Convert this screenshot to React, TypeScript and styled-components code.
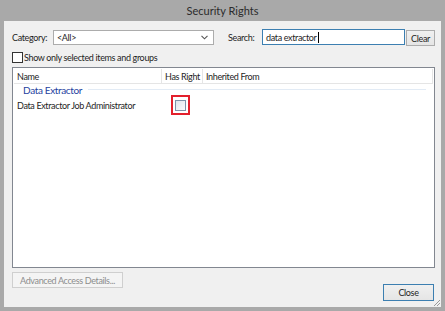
import React from "react";
import styled, { createGlobalStyle } from "styled-components";

const GlobalStyle = createGlobalStyle`
  html, body {
    margin: 0;
    padding: 0;
    background: #a9a9a9;
  }
  body {
    font-family: Lato, "Liberation Sans", sans-serif;
    font-size: 9px;
    letter-spacing: -0.35px;
    color: #1e1e1e;
  }
`;

const Window = styled.div`
  width: 445px;
  height: 311px;
  box-sizing: border-box;
  display: flex;
  flex-direction: column;
  background: #a9a9a9;
  padding: 0 4px 4px 4px;
`;

const TitleBar = styled.div`
  height: 21px;
  display: flex;
  align-items: center;
  justify-content: center;
  font-size: 11px;
  letter-spacing: 0;
  color: #2b2b2b;
`;

const Client = styled.div`
  flex: 1;
  background: #f0f0f0;
  display: flex;
  flex-direction: column;
  padding: 8px 6px 0 8px;
  position: relative;
`;

const TopRow = styled.div`
  display: flex;
  align-items: center;
  height: 16px;
`;

const Label = styled.span<{ $width: number }>`
  width: ${(p) => p.$width}px;
  flex: none;
  white-space: nowrap;
  line-height: 15px;
`;

const Select = styled.div`
  width: 161px;
  height: 15px;
  box-sizing: border-box;
  border: 1px solid #acacac;
  background: #fff;
  display: flex;
  align-items: center;
  justify-content: space-between;
  padding: 0 5px 0 3px;
  margin-right: 14px;
`;

const Chevron = styled.svg`
  width: 7px;
  height: 5px;
`;

const SearchInput = styled.div`
  width: 143px;
  height: 16px;
  box-sizing: border-box;
  border: 1px solid #3c7fb1;
  background: #fff;
  display: flex;
  align-items: center;
  padding-left: 3px;
`;

const Caret = styled.span`
  display: inline-block;
  width: 1px;
  height: 11px;
  background: #000;
  margin-left: 1px;
`;

const Button = styled.div<{ $width: number; $disabled?: boolean; $focused?: boolean }>`
  width: ${(p) => p.$width}px;
  height: 16px;
  box-sizing: border-box;
  display: flex;
  align-items: center;
  justify-content: center;
  white-space: nowrap;
  border: 1px solid
    ${(p) => (p.$disabled ? "#cfcfcf" : p.$focused ? "#3c7fb1" : "#acacac")};
  background: ${(p) => (p.$disabled ? "#f4f4f4" : "linear-gradient(#f0f0f0, #e5e5e5)")};
  color: ${(p) => (p.$disabled ? "#8d8d8d" : "#1e1e1e")};
`;

const ClearButton = styled(Button)`
  margin-left: 1px;
  margin-top: 2px;
`;

const CheckRow = styled.div`
  display: flex;
  align-items: center;
  margin-top: 6px;
  height: 12px;
`;

const Box = styled.span`
  width: 11px;
  height: 11px;
  box-sizing: border-box;
  border: 1px solid #333;
  background: #fff;
  margin-right: 1px;
  flex: none;
`;

const ListBox = styled.div`
  margin-top: 4px;
  height: 201px;
  box-sizing: border-box;
  border: 1px solid #828790;
  background: #fff;
  padding: 1px;
`;

const Header = styled.div`
  display: grid;
  grid-template-columns: 148px 41px 1fr;
  height: 14px;
  border-bottom: 1px solid #e5e5e5;
`;

const HeaderCell = styled.div`
  display: flex;
  align-items: center;
  padding-left: 3px;
  border-right: 1px solid #e5e5e5;
  white-space: nowrap;
`;

const GroupRow = styled.div`
  display: flex;
  align-items: center;
  height: 11px;
  padding-left: 9px;
  padding-right: 7px;
  color: #1e3f9e;
  font-size: 10px;
`;

const GroupLine = styled.span`
  flex: 1;
  height: 1px;
  background: #e2ebf5;
  margin-left: 6px;
`;

const ItemRow = styled.div`
  display: grid;
  grid-template-columns: 154px 20px 1fr;
  align-items: center;
  height: 20px;
  padding-left: 3px;
  white-space: nowrap;
`;

const Highlight = styled.div`
  width: 19px;
  height: 20px;
  box-sizing: border-box;
  border: 2px solid #e3202c;
  display: flex;
  align-items: center;
  justify-content: center;
`;

const RightBox = styled.span`
  width: 11px;
  height: 11px;
  box-sizing: border-box;
  border: 1px solid #7e92a8;
  background: linear-gradient(135deg, #dfe5ec, #fafbfc);
`;

const BottomArea = styled.div`
  flex: 1;
  display: flex;
  justify-content: space-between;
  padding-top: 4px;
  padding-right: 1px;
`;

const CloseButton = styled(Button)`
  align-self: flex-start;
  margin-top: 12px;
  height: 17px;
`;

const Grip = styled.svg`
  position: absolute;
  right: 0;
  bottom: 0;
  width: 9px;
  height: 9px;
`;

export default function App() {
  return (
    <>
      <GlobalStyle />
      <Window>
        <TitleBar>Security Rights</TitleBar>
        <Client>
          <TopRow>
            <Label $width={41}>Category:</Label>
            <Select>
              <span>&lt;All&gt;</span>
              <Chevron viewBox="0 0 7 5">
                <path d="M0.5 0.8 L3.5 3.8 L6.5 0.8" fill="none" stroke="#555" strokeWidth="1.1" />
              </Chevron>
            </Select>
            <Label $width={34}>Search:</Label>
            <SearchInput>
              data extractor
              <Caret />
            </SearchInput>
            <ClearButton $width={29}>Clear</ClearButton>
          </TopRow>
          <CheckRow>
            <Box />
            <span>Show only selected items and groups</span>
          </CheckRow>
          <ListBox>
            <Header>
              <HeaderCell>Name</HeaderCell>
              <HeaderCell>Has Right</HeaderCell>
              <HeaderCell>Inherited From</HeaderCell>
            </Header>
            <GroupRow>
              Data Extractor
              <GroupLine />
            </GroupRow>
            <ItemRow>
              <span>Data Extractor Job Administrator</span>
              <Highlight>
                <RightBox />
              </Highlight>
              <span />
            </ItemRow>
          </ListBox>
          <BottomArea>
            <Button $width={111} $disabled>
              Advanced Access Details...
            </Button>
            <CloseButton $width={51} $focused>
              Close
            </CloseButton>
          </BottomArea>
          <Grip viewBox="0 0 9 9">
            <path d="M8 2 L2 8 M8 5 L5 8" stroke="#9a9a9a" strokeWidth="1" />
          </Grip>
        </Client>
      </Window>
    </>
  );
}
